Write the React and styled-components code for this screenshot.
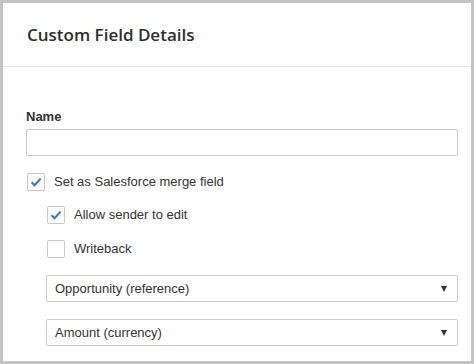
import React from "react";
import styled, { createGlobalStyle } from "styled-components";

const Global = createGlobalStyle`
  html, body {
    margin: 0;
    padding: 0;
    background: #c4c4c4;
  }
  * {
    box-sizing: border-box;
  }
`;

const Frame = styled.div`
  width: 474px;
  height: 364px;
  border: 3px solid #c4c4c4;
  background: #fff;
  overflow: hidden;
`;

const Header = styled.div`
  height: 64px;
  display: flex;
  align-items: center;
  padding: 0 0 0 24px;
  border-bottom: 1px solid #e6e6e6;
`;

const Title = styled.h1`
  margin: 0;
  font-family: "Open Sans", sans-serif;
  font-weight: 600;
  font-size: 17px;
  color: #2e2e2e;
`;

const Body = styled.div`
  display: flex;
  flex-direction: column;
  padding: 42px 13px 0 23px;
  font-family: "Liberation Sans", Arial, sans-serif;
  font-size: 13px;
  color: #333;
`;

const Label = styled.label`
  font-weight: 700;
  line-height: 16px;
  margin-bottom: 4px;
`;

const TextInput = styled.input`
  height: 27px;
  border: 1px solid #cccccc;
  border-radius: 2px;
  padding: 0 8px;
  font: inherit;
  outline: none;
`;

const CheckRow = styled.label`
  display: flex;
  align-items: center;
  height: 18px;
  margin-top: ${(p) => p.$top}px;
  margin-left: ${(p) => (p.$nested ? 21 : 1)}px;
  gap: 9px;
  line-height: 18px;
`;

const Box = styled.span`
  width: 18px;
  height: 18px;
  flex: none;
  border: 1px solid #c9c9c9;
  border-radius: 2px;
  display: flex;
  align-items: center;
  justify-content: center;
  background: #fff;
`;

const Select = styled.div`
  height: 27px;
  margin-top: ${(p) => p.$top}px;
  margin-left: 20px;
  border: 1px solid #cccccc;
  border-radius: 2px;
  display: flex;
  align-items: center;
  justify-content: space-between;
  padding: 0 10px 0 8px;
`;

const Arrow = styled.span`
  width: 0;
  height: 0;
  border-left: 3.5px solid transparent;
  border-right: 3.5px solid transparent;
  border-top: 6px solid #333;
`;

const Check = ({ checked }) => (
  <Box>
    {checked && (
      <svg width="12" height="10" viewBox="0 0 12 10">
        <path d="M1.5 5.2 L4.6 8.2 L10.6 1.6" fill="none" stroke="#2f74d6" strokeWidth="2" />
      </svg>
    )}
  </Box>
);

export default function App() {
  return (
    <>
      <Global />
      <Frame>
        <Header>
          <Title>Custom Field Details</Title>
        </Header>
        <Body>
          <Label>Name</Label>
          <TextInput />
          <CheckRow $top={17}>
            <Check checked />
            Set as Salesforce merge field
          </CheckRow>
          <CheckRow $top={15} $nested>
            <Check checked />
            Allow sender to edit
          </CheckRow>
          <CheckRow $top={16} $nested>
            <Check />
            Writeback
          </CheckRow>
          <Select $top={17}>
            Opportunity (reference)
            <Arrow />
          </Select>
          <Select $top={17}>
            Amount (currency)
            <Arrow />
          </Select>
        </Body>
      </Frame>
    </>
  );
}
